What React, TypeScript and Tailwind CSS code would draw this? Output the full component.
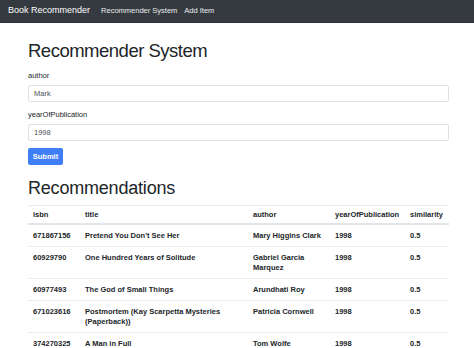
const ROWS = [
  { isbn: "671867156", title: "Pretend You Don't See Her", author: "Mary Higgins Clark", year: "1998", sim: "0.5" },
  { isbn: "60929790", title: "One Hundred Years of Solitude", author: "Gabriel Garcia Marquez", year: "1998", sim: "0.5" },
  { isbn: "60977493", title: "The God of Small Things", author: "Arundhati Roy", year: "1998", sim: "0.5" },
  { isbn: "671023616", title: "Postmortem (Kay Scarpetta Mysteries (Paperback))", author: "Patricia Cornwell", year: "1998", sim: "0.5" },
  { isbn: "374270325", title: "A Man in Full", author: "Tom Wolfe", year: "1998", sim: "0.5" },
];

export default function App() {
  return (
    <div className="h-[348px] bg-white font-['Liberation_Sans',Arial,sans-serif] text-[#212529] overflow-hidden">
      <nav className="flex h-[23px] items-center bg-[#343a40] px-[8px] border-b border-[#2c3034]">
        <span className="text-[9px] text-white">Book Recommender</span>
        <span className="ml-[11px] text-[7.5px] text-white/90">Recommender System</span>
        <span className="ml-[7px] text-[7.5px] text-white/90">Add Item</span>
      </nav>

      <main className="ml-[28px] w-[421px]">
        <h1 className="mt-[16px] text-[18.5px] leading-[24px] tracking-[-0.5px]">Recommender System</h1>

        <form className="mt-[8px]">
          <label className="block text-[7.5px] leading-[10px]">author</label>
          <div className="mt-[4px] flex h-[17px] items-center rounded-[2px] border border-[#dfe2e5] px-[5px] text-[7.5px] text-[#495057]">
            Mark
          </div>
          <label className="mt-[8px] block text-[7.5px] leading-[10px]">yearOfPublication</label>
          <div className="mt-[4px] flex h-[17px] items-center rounded-[2px] border border-[#dfe2e5] px-[5px] text-[7.5px] text-[#495057]">
            1998
          </div>
          <button
            type="button"
            className="mt-[7px] flex h-[17px] w-[35px] items-center justify-center rounded-[2px] bg-[#3f7ef6] text-[7.5px] font-semibold text-white"
          >
            Submit
          </button>
        </form>

        <h2 className="mt-[12px] text-[18px] leading-[22px] tracking-[-0.2px]">Recommendations</h2>

        <table className="mt-[6px] w-[421px] table-fixed border-collapse text-left text-[7.5px] font-bold leading-[10px]">
          <colgroup>
            <col className="w-[52px]" />
            <col className="w-[168px]" />
            <col className="w-[82px]" />
            <col className="w-[75px]" />
            <col className="w-[44px]" />
          </colgroup>
          <thead>
            <tr className="border-t border-[#e9ecef] border-b-2 border-b-[#e3e6e9]">
              <th className="px-[5px] py-[3.5px] font-bold">isbn</th>
              <th className="px-[5px] py-[3.5px] font-bold">title</th>
              <th className="px-[5px] py-[3.5px] font-bold">author</th>
              <th className="px-[5px] py-[3.5px] font-bold">yearOfPublication</th>
              <th className="px-[5px] py-[3.5px] font-bold">similarity</th>
            </tr>
          </thead>
          <tbody>
            {ROWS.map((r) => (
              <tr key={r.isbn} className="border-b border-[#e9ecef] align-top">
                <td className="px-[5px] py-[5.5px]">{r.isbn}</td>
                <td className="px-[5px] py-[5.5px]">{r.title}</td>
                <td className="px-[5px] py-[5.5px]">{r.author}</td>
                <td className="px-[5px] py-[5.5px]">{r.year}</td>
                <td className="px-[5px] py-[5.5px]">{r.sim}</td>
              </tr>
            ))}
          </tbody>
        </table>
      </main>
    </div>
  );
}
